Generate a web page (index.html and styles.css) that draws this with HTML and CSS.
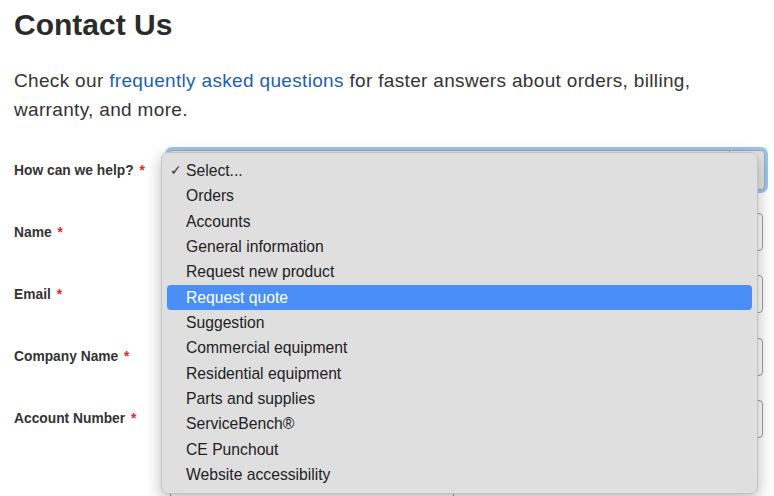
FILE: index.html
```html
<!DOCTYPE html>
<html lang="en">
<head>
    <meta charset="UTF-8">
    <title>Contact Us</title>
    <link rel="stylesheet" href="styles.css">
</head>
<body>
    <div class="page">
        <h1>Contact Us</h1>
        <p class="intro">Check our <a href="#">frequently asked questions</a> for faster answers about orders, billing, warranty, and more.</p>

        <form class="contact-form">
            <div class="row">
                <label>How can we help? <span class="req">*</span></label>
                <div class="field">
                    <div class="select focused"><span class="arrow"></span></div>
                    <ul class="menu">
                        <li class="checked">Select...</li>
                        <li>Orders</li>
                        <li>Accounts</li>
                        <li>General information</li>
                        <li>Request new product</li>
                        <li class="active">Request quote</li>
                        <li>Suggestion</li>
                        <li>Commercial equipment</li>
                        <li>Residential equipment</li>
                        <li>Parts and supplies</li>
                        <li>ServiceBench®</li>
                        <li>CE Punchout</li>
                        <li>Website accessibility</li>
                    </ul>
                </div>
            </div>
            <div class="row">
                <label>Name <span class="req">*</span></label>
                <div class="field"><div class="input"></div></div>
            </div>
            <div class="row">
                <label>Email <span class="req">*</span></label>
                <div class="field"><div class="input"></div></div>
            </div>
            <div class="row">
                <label>Company Name <span class="req">*</span></label>
                <div class="field"><div class="input"></div></div>
            </div>
            <div class="row">
                <label>Account Number <span class="req">*</span></label>
                <div class="field"><div class="input"></div></div>
            </div>
            <div class="row">
                <label></label>
                <div class="field"><div class="input short"></div></div>
            </div>
        </form>
    </div>
</body>
</html>
```

FILE: styles.css
```css
body { margin: 0; background: #fff; font-family: "Liberation Sans", Arial, sans-serif; color: #333; overflow: hidden; }
.page { padding: 0 9px 0 14px; }
h1 { margin: 0; padding-top: 6px; font-size: 30px; line-height: 38px; color: #2b2b2b; }
.intro { margin: 22px 0 26px; font-size: 19px; line-height: 29px; letter-spacing: 0.33px; color: #333; }
.intro a { color: #1a5fb4; text-decoration: none; }

.row { display: flex; align-items: center; height: 38px; margin-bottom: 24.3px; }
.row:first-child { height: 40px; margin-bottom: 23px; }
.row label { width: 154px; flex: none; font-size: 13.8px; font-weight: bold; color: #333; }
.req { color: #e02b2b; margin-left: 2px; }
.field { position: relative; flex: 1; height: 100%; }

.input { height: 100%; box-sizing: border-box; border: 1px solid #9a9a9a; border-radius: 4px; margin-right: 2px; }
.input.short { width: 284px; margin-left: 2px; }
.select { height: 100%; box-sizing: border-box; border: 1px solid #a8a8a8; border-radius: 4px; background: #e4e4e4; position: relative; }
.select.focused { box-shadow: 0 0 0 3px #98c6f3; }
.arrow { position: absolute; right: 34px; top: 0; bottom: 0; border-left: 1px solid #a8a8a8; }

.menu { position: absolute; left: -7px; top: 2px; width: 597px; margin: 0; padding: 5px 0 6px; list-style: none; box-sizing: border-box;
    background: #dfdfdf; border: 1px solid #c4c4c4; border-radius: 7px; box-shadow: 0 5px 16px rgba(0,0,0,0.28); z-index: 2; }
.menu li { height: 25.33px; line-height: 25px; margin: 0 5px; padding-left: 19px; border-radius: 4px; font-size: 15.7px; color: #222; position: relative; }
.menu li.checked::before { content: "\2713"; position: absolute; left: 3px; font-size: 14px; color: #333; }
.menu li.active { background: #4a8ff8; color: #fff; }
```
